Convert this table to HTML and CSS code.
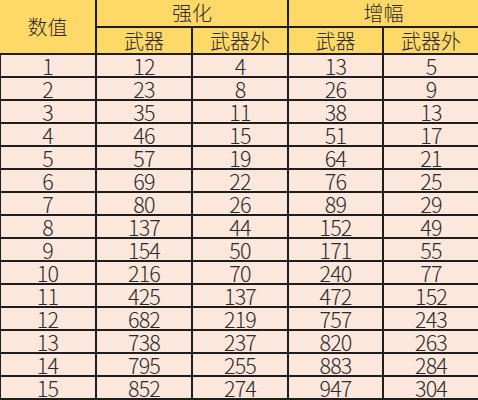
FILE: index.html
```html
<!DOCTYPE html>
<html lang="zh">
<head>
<meta charset="utf-8">
<link rel="stylesheet" href="styles.css">
</head>
<body>
<div class="sheet">
  <div class="cell head span-rows">数值</div>
  <div class="cell head span-cols">强化</div>
  <div class="cell head span-cols">增幅</div>
  <div class="cell head">武器</div>
  <div class="cell head">武器外</div>
  <div class="cell head">武器</div>
  <div class="cell head">武器外</div>

  <div class="cell first">1</div><div class="cell">12</div><div class="cell">4</div><div class="cell">13</div><div class="cell">5</div>
  <div class="cell first">2</div><div class="cell">23</div><div class="cell">8</div><div class="cell">26</div><div class="cell">9</div>
  <div class="cell first">3</div><div class="cell">35</div><div class="cell">11</div><div class="cell">38</div><div class="cell">13</div>
  <div class="cell first">4</div><div class="cell">46</div><div class="cell">15</div><div class="cell">51</div><div class="cell">17</div>
  <div class="cell first">5</div><div class="cell">57</div><div class="cell">19</div><div class="cell">64</div><div class="cell">21</div>
  <div class="cell first">6</div><div class="cell">69</div><div class="cell">22</div><div class="cell">76</div><div class="cell">25</div>
  <div class="cell first">7</div><div class="cell">80</div><div class="cell">26</div><div class="cell">89</div><div class="cell">29</div>
  <div class="cell first">8</div><div class="cell">137</div><div class="cell">44</div><div class="cell">152</div><div class="cell">49</div>
  <div class="cell first">9</div><div class="cell">154</div><div class="cell">50</div><div class="cell">171</div><div class="cell">55</div>
  <div class="cell first">10</div><div class="cell">216</div><div class="cell">70</div><div class="cell">240</div><div class="cell">77</div>
  <div class="cell first">11</div><div class="cell">425</div><div class="cell">137</div><div class="cell">472</div><div class="cell">152</div>
  <div class="cell first">12</div><div class="cell">682</div><div class="cell">219</div><div class="cell">757</div><div class="cell">243</div>
  <div class="cell first">13</div><div class="cell">738</div><div class="cell">237</div><div class="cell">820</div><div class="cell">263</div>
  <div class="cell first">14</div><div class="cell">795</div><div class="cell">255</div><div class="cell">883</div><div class="cell">284</div>
  <div class="cell first">15</div><div class="cell">852</div><div class="cell">274</div><div class="cell">947</div><div class="cell">304</div>
</div>
</body>
</html>
```
FILE: styles.css
```css
html, body {
  margin: 0;
  padding: 0;
  background: #1e1e1e;
}
body {
  width: 478px;
  height: 400px;
  overflow: hidden;
}
.sheet {
  display: grid;
  grid-template-columns: 95px 94px 94px 93px 94px;
  grid-template-rows: 26px 25px repeat(15, 21px);
  gap: 2px;
  background: #1e1e1e;
  padding-bottom: 2px;
  font-family: "Noto Sans CJK SC", "Noto Sans", sans-serif;
  font-weight: 300;
  color: #2a2a2a;
}
.cell {
  background: #fbe7dc;
  display: flex;
  align-items: center;
  justify-content: center;
  font-size: 21.5px;
  letter-spacing: -0.8px;
  line-height: 1;
  padding-top: 1px;
}
.first {
  box-shadow: inset 1px 0 0 #1e1e1e;
}
.head {
  background: #fed967;
  font-size: 20px;
  letter-spacing: 0;
  padding-top: 0;
}
.span-rows {
  grid-row: span 2;
}
.span-cols {
  grid-column: span 2;
}
```
